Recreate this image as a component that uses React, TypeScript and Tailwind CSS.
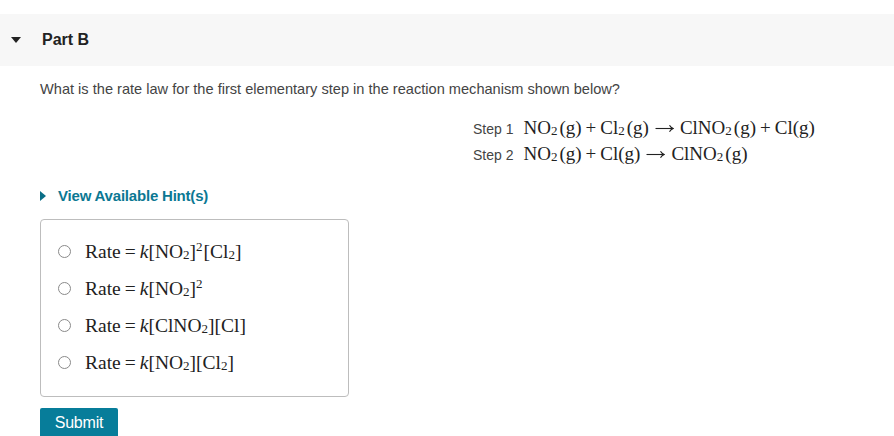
import React from 'react';

const serif = { fontFamily: '"Liberation Serif", "DejaVu Serif", serif' };

function Sub({ children }: { children: React.ReactNode }) {
  return <sub className="text-[13px] relative top-[1px]">{children}</sub>;
}

function Op({ children }: { children: React.ReactNode }) {
  return <span className="mx-[4px]">{children}</span>;
}

function Arrow() {
  return (
    <svg className="mx-[6px] inline-block self-center" width="19" height="10" viewBox="0 0 19 10" fill="none" stroke="#222" strokeWidth="1.1">
      <path d="M0.5 5.5H18" />
      <path d="M14.5 2.2Q15.8 4.6 18.2 5.5Q15.8 6.4 14.5 8.8" />
    </svg>
  );
}

function Radio() {
  return <span className="inline-block w-[13px] h-[13px] rounded-full border border-[#8a8a8a] bg-white mr-[14px] shrink-0" />;
}

const options: React.ReactNode[] = [
  <>Rate<Op>=</Op><i>k</i>[NO<Sub>2</Sub>]<sup className="text-[13px]">2</sup><span className="ml-[1px]">[Cl<Sub>2</Sub>]</span></>,
  <>Rate<Op>=</Op><i>k</i>[NO<Sub>2</Sub>]<sup className="text-[13px]">2</sup></>,
  <>Rate<Op>=</Op><i>k</i>[ClNO<Sub>2</Sub>][Cl]</>,
  <>Rate<Op>=</Op><i>k</i>[NO<Sub>2</Sub>][Cl<Sub>2</Sub>]</>,
];

export default function App() {
  return (
    <div className="w-[894px] h-[436px] overflow-hidden bg-white text-[#333]" style={{ fontFamily: '"Liberation Sans", Arial, sans-serif' }}>
      {/* Part header */}
      <div className="mt-[14px] h-[52px] bg-[#f7f7f7] flex items-center">
        <span className="ml-[11px] w-0 h-0 border-l-[5px] border-r-[5px] border-t-[6px] border-l-transparent border-r-transparent border-t-[#222]" />
        <span className="ml-[21px] text-[16px] font-bold text-[#222]">Part B</span>
      </div>

      <div className="px-[40px]">
        <p className="mt-[13px] text-[14.6px] text-[#444]">What is the rate law for the first elementary step in the reaction mechanism shown below?</p>

        {/* Mechanism */}
        <div className="mt-[13px] ml-[433px] flex flex-col gap-[2px]">
          <div className="flex items-baseline h-[24px]">
            <span className="text-[14px] text-[#444] mr-[10px]">Step 1</span>
            <span className="text-[19px] text-[#222] inline-flex items-baseline" style={serif}>
              <span>NO<Sub>2</Sub><span className="ml-[2px]">(g)</span><Op>+</Op>Cl<Sub>2</Sub><span className="ml-[2px]">(g)</span></span>
              <Arrow />
              <span>ClNO<Sub>2</Sub><span className="ml-[2px]">(g)</span><Op>+</Op>Cl(g)</span>
            </span>
          </div>
          <div className="flex items-baseline h-[24px]">
            <span className="text-[14px] text-[#444] mr-[10px]">Step 2</span>
            <span className="text-[19px] text-[#222] inline-flex items-baseline" style={serif}>
              <span>NO<Sub>2</Sub><span className="ml-[2px]">(g)</span><Op>+</Op>Cl(g)</span>
              <Arrow />
              <span>ClNO<Sub>2</Sub><span className="ml-[2px]">(g)</span></span>
            </span>
          </div>
        </div>

        {/* Hints */}
        <div className="mt-[21px] flex items-center text-[15px] font-bold text-[#0b7893]">
          <span className="w-0 h-0 border-t-[5px] border-b-[5px] border-l-[6px] border-t-transparent border-b-transparent border-l-[#0a6e87]" />
          <span className="ml-[12px] tracking-[-0.2px]">View Available Hint(s)</span>
        </div>

        {/* Answer choices */}
        <div className="mt-[12px] w-[309px] h-[178px] border border-[#bdbdbd] rounded-[4px] pl-[17px] pt-[20px] flex flex-col gap-[15px]">
          {options.map((o, i) => (
            <label key={i} className="flex items-center h-[22px]">
              <Radio />
              <span className="text-[19.5px] text-[#222]" style={serif}>{o}</span>
            </label>
          ))}
        </div>

        <button className="mt-[11px] w-[78px] h-[30px] bg-[#077d9a] text-white text-[16px] rounded-t-[2px] tracking-[-0.2px]">Submit</button>
      </div>
    </div>
  );
}
